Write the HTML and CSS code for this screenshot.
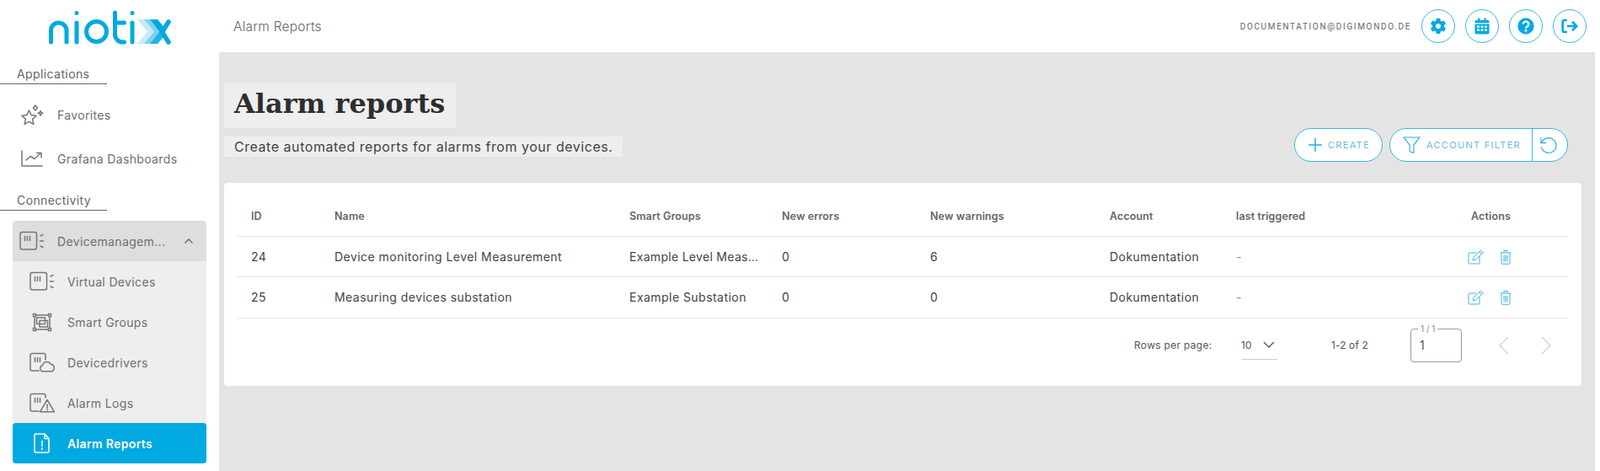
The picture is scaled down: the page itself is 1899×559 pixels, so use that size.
FILE: index.html
```html
<!DOCTYPE html>
<html lang="en">
<head>
<meta charset="utf-8">
<title>Alarm Reports</title>
<link rel="stylesheet" href="styles.css">
</head>
<body>
<svg class="defs" aria-hidden="true">
  <symbol id="i-device" viewBox="0 0 30 24">
    <rect x="1" y="1.5" width="19.5" height="20.5" rx="2.5"/>
    <path d="M6.5 6.5v5M9.5 6.5v5M12.5 6.5v5M25 6l3-1.5M24.5 12h4M25 18l3 1.5"/>
  </symbol>
  <symbol id="i-cloud" viewBox="0 0 30 24">
    <path d="M11 22H3a2 2 0 0 1-2-2V3.500a2 2 0 0 1 2-2h14a2 2 0 0 1 2 2V9"/>
    <path d="M6.500 6.500v5M9.500 6.500v5M12.500 6.500v5"/>
    <path d="M16 22.800a3.600 3.600 0 0 1-.5-7.100a5.300 5.300 0 0 1 10-1.200a4.200 4.200 0 0 1 .5 8.300z"/>
  </symbol>
  <symbol id="i-alarm" viewBox="0 0 30 24">
    <path d="M11 22H3a2 2 0 0 1-2-2V3.500a2 2 0 0 1 2-2h14a2 2 0 0 1 2 2V6"/>
    <path d="M6.500 6.500v5M9.500 6.500v5M12.500 6.500v5"/>
    <path d="M21 8.500l8.500 14.300H12.500zM21 14v4.500M21 20v.8"/>
  </symbol>
  <symbol id="i-edit" viewBox="0 0 20 18">
    <path d="M14 8v8a1 1 0 0 1-1 1H2a1 1 0 0 1-1-1V5a1 1 0 0 1 1-1h8"/>
    <path d="M6 13l.8-3.500L15.500 1l2.700 2.700-8.700 8.500zM13.800 2.800l2.700 2.700"/>
  </symbol>
  <symbol id="i-trash" viewBox="0 0 14 18">
    <path d="M1 4h12M5 3.800V1.500h4v2.300M2 4v12a1.300 1.300 0 0 0 1.300 1.300h7.400A1.300 1.300 0 0 0 12 16V4M5 7v7.500M7 7v7.500M9 7v7.500"/>
  </symbol>
</svg>

<header class="topbar">
  <div class="logo-slot">
    <svg class="logo" viewBox="0 0 170 48" role="img" aria-label="niotix">
      <g class="logo-strokes">
        <path d="M20.500 43V29a9 9 0 0 1 9-9h0a9.500 9.500 0 0 1 9.500 9.500V43"/>
        <path d="M51 20v23M51 8.500v.1"/>
        <circle cx="74.500" cy="30.500" r="12"/>
        <path d="M96.500 8v26a9 9 0 0 0 9 9h2M96.500 20h11"/>
        <path d="M117 20v23M117 8.500v.1"/>
      </g>
      <polygon class="lg-a" points="123,16 132,16 145,30.500 132,45 123,45 135,30.500"/>
      <polygon class="lg-b" points="131,16 140,16 153,30.500 140,45 131,45 143,30.500"/>
      <polygon class="lg-e" points="138,45 147,45 156,34.500 151,28.500"/>
      <polygon class="lg-f" points="138,16 147,16 157,28 152,34"/>
      <path class="lg-d" d="M152.500 31L160 19M152.500 31L160 43"/>
    </svg>
  </div>
  <div class="page-name">Alarm Reports</div>
  <div class="top-right">
    <span class="email">DOCUMENTATION@DIGIMONDO.DE</span>
    <button class="round" type="button" aria-label="Settings">
      <svg class="top-ico" viewBox="0 0 20 20">
        <g class="solid">
          <circle cx="10" cy="10" r="7"/>
          <rect x="7.500" y="0.800" width="5" height="18.400" rx="1"/>
          <rect x="7.500" y="0.800" width="5" height="18.400" rx="1" transform="rotate(60 10 10)"/>
          <rect x="7.500" y="0.800" width="5" height="18.400" rx="1" transform="rotate(120 10 10)"/>
        </g>
        <circle class="hole" cx="10" cy="10" r="3"/>
      </svg>
    </button>
    <button class="round" type="button" aria-label="Calendar">
      <svg class="top-ico" viewBox="0 0 20 20">
        <path class="solid" d="M1.500 7.500h17V18a1.500 1.500 0 0 1-1.500 1.500H3A1.500 1.500 0 0 1 1.500 18zM3 3h2.200V.500h2.300V3h5V.500h2.300V3H17a1.500 1.500 0 0 1 1.500 1.500v1.700h-17V4.500A1.500 1.500 0 0 1 3 3z"/>
        <path class="grid-holes" d="M4 9.500h3v2.300H4zM8.500 9.500h3v2.300h-3zM13 9.500h3v2.300h-3zM4 13.500h3v2.300H4zM8.500 13.500h3v2.300h-3zM13 13.500h3v2.300h-3z"/>
      </svg>
    </button>
    <button class="round" type="button" aria-label="Help">
      <svg class="top-ico" viewBox="0 0 20 20">
        <circle class="solid" cx="10" cy="10" r="9.700"/>
        <path class="qmark" d="M6.800 7.600a3.300 3.100 0 1 1 5 2.700c-1.200.7-1.800 1.200-1.800 2.500"/>
        <rect class="hole" x="8.700" y="14" width="2.600" height="2.600" rx=".5"/>
      </svg>
    </button>
    <button class="round" type="button" aria-label="Log out">
      <svg class="top-ico" viewBox="0 0 20 20">
        <path class="signout" d="M7 3H3.500A1.800 1.800 0 0 0 1.700 4.800v10.400A1.800 1.800 0 0 0 3.500 17H7M7 10h11M13 4.800L18.300 10 13 15.200"/>
      </svg>
    </button>
  </div>
</header>

<div class="shell">
  <nav class="sidebar">
    <div class="section-label">Applications</div>
    <a class="nav-row">
      <svg class="nav-ico" viewBox="0 0 30 24">
        <path d="M11.500 7l2.600 5.600 6 .7-4.500 4.100 1.300 6-5.400-3-5.400 3 1.300-6-4.500-4.100 6-.7zM19 1l2.600 3L19 7l-2.600-3zM25 7.500l.8 2 2 .8-2 .8-.8 2-.8-2-2-.8 2-.8z"/>
      </svg>
      <span>Favorites</span>
    </a>
    <a class="nav-row">
      <svg class="nav-ico" viewBox="0 0 30 24">
        <path d="M3 3v18h24M8 14l5-4.500 5 3 7-6.500M20.500 5.500H26V11"/>
      </svg>
      <span>Grafana Dashboards</span>
    </a>
    <div class="section-label section-gap">Connectivity</div>
    <div class="group">
      <a class="group-head">
        <svg class="nav-ico"><use href="#i-device"/></svg>
        <span class="group-name">Devicemanagem...</span>
        <svg class="caret" viewBox="0 0 12 8"><path d="M1.500 6.500L6 2l4.500 4.500"/></svg>
      </a>
      <div class="group-body">
        <a class="sub-row"><svg class="nav-ico"><use href="#i-device"/></svg><span>Virtual Devices</span></a>
        <a class="sub-row">
          <svg class="nav-ico" viewBox="0 0 30 24">
            <path d="M6 4h18M6 21h18M6 4v17M24 4v17M8.500 7h10v7.500h-10zM12 10.500h9.500V18H12z"/>
            <path class="dots" d="M4.500 2.500h3v3h-3zM22.500 2.500h3v3h-3zM4.500 19.500h3v3h-3zM22.500 19.500h3v3h-3z"/>
          </svg>
          <span>Smart Groups</span>
        </a>
        <a class="sub-row"><svg class="nav-ico"><use href="#i-cloud"/></svg><span>Devicedrivers</span></a>
        <a class="sub-row"><svg class="nav-ico"><use href="#i-alarm"/></svg><span>Alarm Logs</span></a>
        <a class="sub-row active">
          <svg class="nav-ico" viewBox="0 0 30 24">
            <path d="M7.500 1H18l5 5.500V21.500a1.500 1.500 0 0 1-1.500 1.500h-14A1.500 1.500 0 0 1 6 21.500v-19A1.500 1.500 0 0 1 7.500 1zM18 1v5.500h5M15 9.500v6M15 17.800v1.800"/>
          </svg>
          <span>Alarm Reports</span>
        </a>
      </div>
    </div>
  </nav>

  <main class="main">
    <div class="page-head">
      <div class="titles">
        <h1 class="title">Alarm reports</h1>
        <p class="subtitle">Create automated reports for alarms from your devices.</p>
      </div>
      <div class="actions">
        <button class="pill create" type="button">
          <svg class="pill-ico plus" viewBox="0 0 16 16"><path d="M8 0v16M0 8h16"/></svg>
          <span>CREATE</span>
        </button>
        <div class="pill filter">
          <button class="filter-main" type="button">
            <svg class="pill-ico funnel" viewBox="0 0 22 22"><path d="M1 1h20l-7.500 9.500V20.500l-5-2v-8z"/></svg>
            <span>ACCOUNT FILTER</span>
          </button>
          <button class="filter-reset" type="button" aria-label="Reset">
            <svg class="pill-ico undo" viewBox="0 0 22 22"><path d="M2 1.500V8h6.500M3 7.500A9.300 9.300 0 1 1 2.500 13"/></svg>
          </button>
        </div>
      </div>
    </div>

    <section class="card">
      <table class="table">
        <thead>
          <tr>
            <th class="c-id">ID</th>
            <th class="c-name">Name</th>
            <th class="c-group">Smart Groups</th>
            <th class="c-err">New errors</th>
            <th class="c-warn">New warnings</th>
            <th class="c-acc">Account</th>
            <th class="c-last">last triggered</th>
            <th class="c-act">Actions</th>
          </tr>
        </thead>
        <tbody>
          <tr>
            <td>24</td>
            <td>Device monitoring Level Measurement</td>
            <td class="short">Example Level Meas…</td>
            <td>0</td>
            <td>6</td>
            <td>Dokumentation</td>
            <td class="muted">-</td>
            <td class="act-cell">
              <svg class="act edit"><use href="#i-edit"/></svg>
              <svg class="act trash"><use href="#i-trash"/></svg>
            </td>
          </tr>
          <tr>
            <td>25</td>
            <td>Measuring devices substation</td>
            <td>Example Substation</td>
            <td>0</td>
            <td>0</td>
            <td>Dokumentation</td>
            <td class="muted">-</td>
            <td class="act-cell">
              <svg class="act edit"><use href="#i-edit"/></svg>
              <svg class="act trash"><use href="#i-trash"/></svg>
            </td>
          </tr>
        </tbody>
      </table>
      <div class="pager">
        <span class="pg-label">Rows per page:</span>
        <div class="pg-select">
          <span>10</span>
          <svg class="pg-caret" viewBox="0 0 14 8"><path d="M1 1l6 6 6-6"/></svg>
        </div>
        <span class="pg-range">1-2 of 2</span>
        <div class="pg-input">
          <span class="pg-legend">1 / 1</span>
          <span>1</span>
        </div>
        <svg class="pg-nav pg-prev" viewBox="0 0 12 24"><path d="M11 2L1 12l10 10"/></svg>
        <svg class="pg-nav pg-next" viewBox="0 0 12 24"><path d="M1 2l10 10L1 22"/></svg>
      </div>
    </section>
  </main>
</div>
</body>
</html>
```
FILE: styles.css
```css
* { box-sizing: border-box; }
html, body { height: 100%; }
body {
  margin: 0;
  background: #fff;
  font-family: Inter, "Open Sans", sans-serif;
  color: #444;
  overflow: hidden;
  display: flex;
  flex-direction: column;
}
.defs { display: none; }
button { font-family: inherit; background: none; padding: 0; cursor: pointer; }

/* top bar */
.topbar { height: 62px; flex: none; display: flex; align-items: center; }
.logo-slot { width: 260px; flex: none; }
.logo { display: block; width: 170px; height: 48px; margin-left: 40px; }
.logo-strokes { fill: none; stroke: #00a9e0; stroke-width: 5; stroke-linecap: round; }
.lg-a { fill: #c4eaf8; }
.lg-b { fill: #7fd3f0; }
.lg-e { fill: #22b4e4; }
.lg-f { fill: #00a9e0; }
.lg-d { fill: none; stroke: #00a9e0; stroke-width: 5.500; stroke-linecap: round; }
.page-name { margin-left: 17px; font-size: 15.500px; font-weight: 300; color: #666; letter-spacing: .25px; }
.top-right { margin-left: auto; padding-right: 16px; display: flex; align-items: center; gap: 12px; }
.email { font-family: Roboto, sans-serif; font-size: 10px; letter-spacing: 1.650px; color: #666; }
.round {
  width: 40px; height: 40px; border-radius: 50%;
  border: 1px solid #3eb4e4; background: #fff;
  display: flex; align-items: center; justify-content: center;
}
.top-ico { width: 20px; height: 20px; display: block; }
.solid { fill: #00a9e0; }
.hole { fill: #fff; }
.grid-holes { fill: #fff; }
.qmark { fill: none; stroke: #fff; stroke-width: 2.400; }
.signout { fill: none; stroke: #00a9e0; stroke-width: 2.600; stroke-linejoin: round; }

/* shell */
.shell { flex: 1; display: flex; min-height: 0; }
.sidebar { width: 260px; flex: none; padding-top: 14px; font-size: 14px; color: #6f6f6f; }
.section-label {
  width: 127px; height: 24px; padding-left: 20px;
  border-bottom: 1px solid #666;
  font-size: 14px; line-height: 23px; color: #666; letter-spacing: .4px;
  margin-bottom: 10px;
}
.section-gap { margin-top: 12px; margin-bottom: 12px; }
.nav-row, .group-head, .sub-row { display: flex; align-items: center; gap: 15px; letter-spacing: .35px; }
.nav-row { height: 52px; padding-left: 23px; }
.nav-ico {
  width: 30px; height: 24px; flex: none;
  fill: none; stroke: #777; stroke-width: 1.500; stroke-linecap: round; stroke-linejoin: round;
}
.group { margin: 0 15px; }
.group-head { height: 48px; padding-left: 8px; background: #dedede; border-radius: 4px 4px 0 0; }
.group-name { width: 131px; white-space: nowrap; }
.caret { width: 12px; height: 8px; margin-left: 4px; fill: none; stroke: #666; stroke-width: 1.300; }
.group-body { background: #eee; }
.sub-row { height: 48px; padding-left: 20px; }
.dots { fill: #eee; }
.sub-row.active { background: #00a9e0; color: #fff; font-weight: 600; border-radius: 4px; }
.active .nav-ico { stroke: #fff; stroke-width: 1.600; }

/* main */
.main { flex: 1; min-width: 0; margin-right: 6px; background: #e4e4e4; padding: 36px 16px 0 6px; }
.page-head { display: flex; justify-content: space-between; align-items: flex-start; }
.title {
  margin: 0; width: 275px; height: 54px; padding-left: 12px;
  background: #eee;
  font-family: "DejaVu Serif", "Liberation Serif", serif;
  font-size: 32px; font-weight: 700; line-height: 50px; color: #2e2e2e;
  white-space: nowrap;
}
.subtitle {
  margin: 10px 0 0; width: 473px; height: 24px; padding-left: 12px;
  background: #eee;
  font-size: 16px; line-height: 24px; color: #444; letter-spacing: .54px;
  white-space: nowrap;
}
.actions { display: flex; gap: 8px; margin-top: 54px; margin-right: 16px; }
.pill {
  height: 40px; border: 1px solid #3eb4e4; border-radius: 20px; background: #fff;
  display: flex; align-items: center;
  font-size: 11px; letter-spacing: 1.300px; color: #6cbbe8;
}
.create { width: 105px; padding-left: 16px; gap: 7px; }
.filter { width: 212px; overflow: hidden; }
.filter-main {
  width: 169px; height: 100%; border: 0; border-right: 1px solid #3eb4e4;
  display: flex; align-items: center; gap: 7px; padding-left: 15px;
  font-size: 11px; letter-spacing: 1.300px; color: #6cbbe8;
}
.filter-reset { flex: 1; height: 100%; border: 0; display: flex; align-items: center; justify-content: center; padding-right: 4px; }
.pill-ico { fill: none; stroke: #29aee3; display: block; flex: none; }
.plus { width: 16px; height: 16px; stroke-width: 1.500; }
.funnel { width: 21px; height: 21px; stroke-width: 1.200; stroke-linejoin: round; }
.undo { width: 21px; height: 21px; stroke-width: 1.200; }

/* card + table */
.card { margin-top: 25px; height: 241px; background: #fff; border-radius: 4px; padding: 16px; }
.table { width: 100%; table-layout: fixed; border-collapse: collapse; font-size: 14px; }
.table th {
  height: 47px; padding: 0 16px; text-align: left;
  font-size: 12.500px; font-weight: 600; color: #666; letter-spacing: .12px;
  border-bottom: 1px solid #e4e4e4;
}
.table td {
  height: 48px; padding: 0 16px; color: #444; letter-spacing: .46px;
  border-bottom: 1px solid #e4e4e4;
  white-space: nowrap;
}
.table tr:last-child td { height: 49px; }
.table .short { letter-spacing: .3px; }
.c-id { width: 99px; }
.c-name { width: 350px; }
.c-group { width: 181px; }
.c-err { width: 176px; }
.c-warn { width: 213px; }
.c-acc { width: 150px; }
.c-last { width: 227px; }
.table .c-act { text-align: center; }
.table .muted { color: #888; }
.table .act-cell { text-align: left; padding-left: 64px; }
.act { fill: none; stroke: #3fb4e6; stroke-width: 1; vertical-align: middle; }
.edit { width: 20px; height: 18px; }
.trash { width: 14px; height: 18px; margin-left: 14px; }

/* pager */
.pager {
  height: 64px; display: flex; align-items: center; justify-content: flex-end;
  padding-right: 20px; font-size: 12px; color: #555;
}
.pg-label { width: 94px; white-space: nowrap; letter-spacing: .3px; }
.pg-select {
  width: 43px; height: 34px; margin-left: 33px; padding-right: 3px;
  border-bottom: 1px solid #ccc;
  display: flex; align-items: center; justify-content: space-between;
}
.pg-caret { width: 14px; height: 8px; fill: none; stroke: #555; stroke-width: 1.300; }
.pg-range { width: 43px; margin-left: 64px; white-space: nowrap; letter-spacing: .1px; }
.pg-input {
  position: relative; width: 61px; height: 40px; margin-left: 51px; padding-left: 10px;
  border: 1px solid #999; border-radius: 4px;
  display: flex; align-items: center; font-size: 14px;
}
.pg-legend {
  position: absolute; top: -7px; left: 8px; padding: 0 3px;
  background: #fff; font-size: 10px; line-height: 12px; color: #888;
}
.pg-nav { width: 12px; height: 24px; fill: none; stroke: #bbb; stroke-width: 1; }
.pg-prev { margin-left: 44px; }
.pg-next { margin-left: 38px; }
```
